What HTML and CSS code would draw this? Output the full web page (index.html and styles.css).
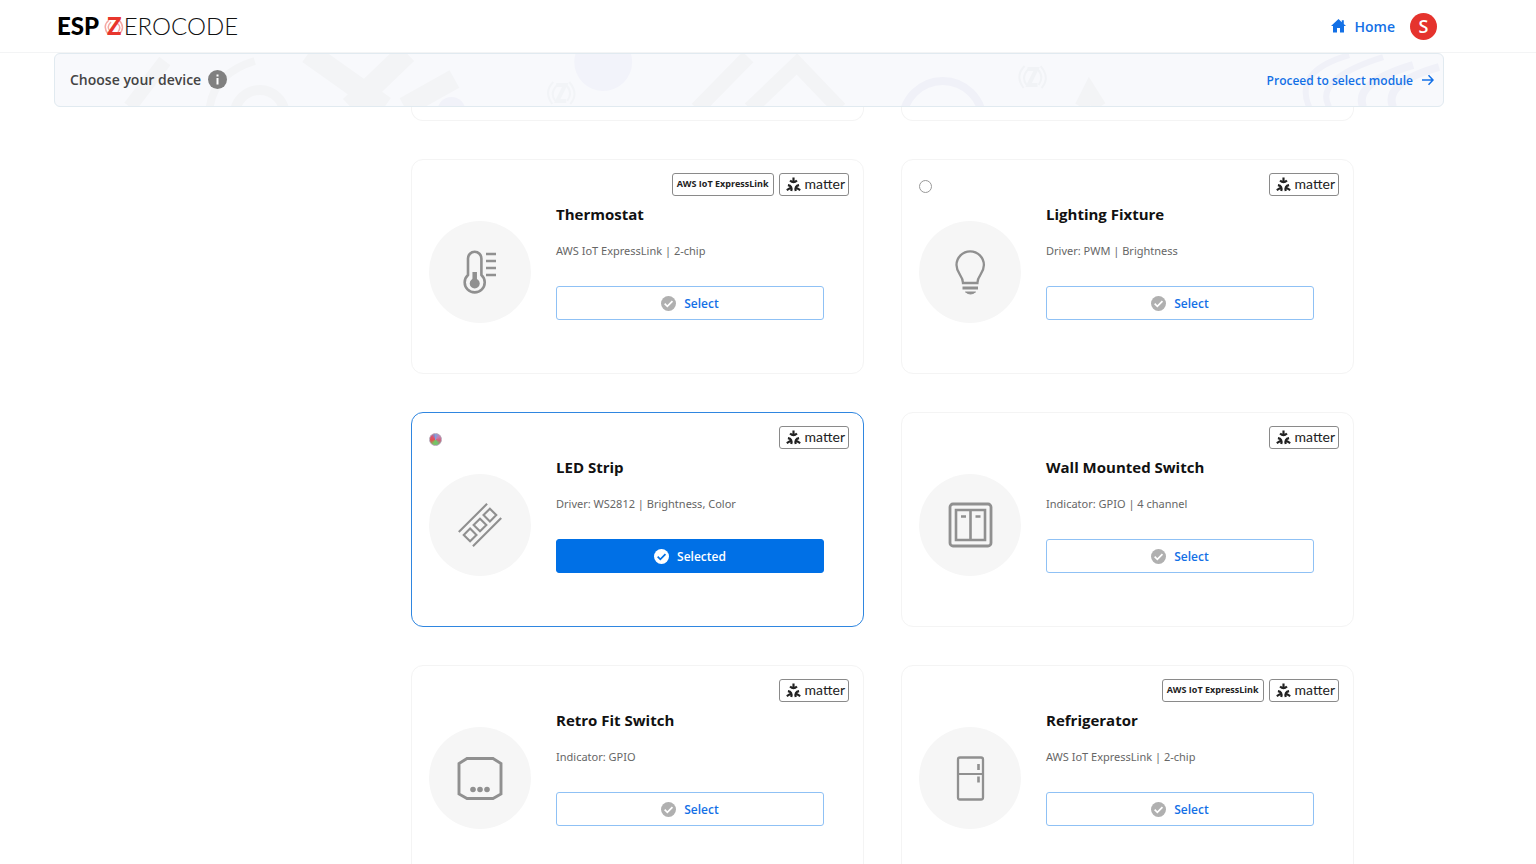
FILE: index.html
```html
<!DOCTYPE html>
<html lang="en">
<head>
    <meta charset="UTF-8">
    <meta name="viewport" content="width=device-width, initial-scale=1.0">
    <title>ESP ZeroCode</title>
    <link rel="stylesheet" href="styles.css">
</head>
<body>
    <!-- shared icons -->
    <svg class="sprite" aria-hidden="true">
        <symbol id="i-check" viewBox="0 0 14 14">
            <circle cx="7" cy="7" r="7" fill="currentColor" stroke="none"/>
            <path d="M3.4 7.2l2.5 2.4 4.8-4.9" fill="none" stroke-width="1.6"/>
        </symbol>
        <symbol id="i-matter" viewBox="0 0 14 14">
            <g fill="none" stroke="currentColor" stroke-width="2">
                <path d="M7 .5v5M3.8 3.2Q7 6.6 10.200 3.2"/>
                <path d="M.7 12.2l4.500-2.600M1.800 7.600Q6.200 8.400 4.900 13"/>
                <path d="M13.300 12.200L8.800 9.600M12.200 7.600Q7.800 8.400 9.100 13"/>
            </g>
        </symbol>
        <symbol id="i-zmark" viewBox="0 0 32 32">
            <g fill="none" stroke="currentColor" stroke-width="2">
                <path d="M8 5Q-2 15 7 27M12 8Q4 16 10 24M24 5Q34 17 25 27M21 8Q28 16 22 24"/>
                <path d="M11 8h9l-8 16h9" stroke-width="4"/>
            </g>
        </symbol>
    </svg>

    <div class="app">
        <header class="header">
            <a class="logo" href="#">
                <span class="logo-esp">ESP</span>
                <span class="logo-name"><span class="logo-z"><svg viewBox="0 0 20 18" aria-hidden="true"><path d="M5 2Q-2 8 4 16M15 2Q22 10 15 16M7 4Q2 9 6 13M13 5Q18 9 14 14" fill="none" stroke="#f5a8a3" stroke-width="1.500"/></svg>Z</span>EROCODE</span>
            </a>
            <nav class="nav">
                <a class="home" href="#">
                    <svg width="15" height="14" viewBox="0 0 15 14" aria-hidden="true"><path d="M7.500 0L0 7h2v6.500h4V9h3v4.500h4V7h2l-2.200-2V1.300h-2v1.900z" fill="currentColor"/></svg>
                    Home
                </a>
                <button class="avatar" type="button">S</button>
            </nav>
        </header>

        <section class="toolbar">
            <svg class="toolbar-art" viewBox="0 0 1390 54" preserveAspectRatio="xMidYMid slice" aria-hidden="true">
                <g fill="none" stroke="#f3f4f6">
                    <path d="M75 54L110 8" stroke-width="14"/>
                    <path d="M155 54Q160 20 200 8" stroke-width="8"/>
                    <circle cx="205" cy="62" r="25" stroke-width="10"/>
                    <path d="M254 0L330 54M352 0L296 54" stroke-width="22"/>
                    <path d="M350 54L400 26" stroke-width="20"/>
                    <path d="M643 56L694 4M696 56L743 11L786 56" stroke-width="15"/>
                    <path d="M1028 54l8-16 10 16" stroke-width="14"/>
                </g>
                <g fill="none" stroke="#f0f1f8">
                    <circle cx="889" cy="68" r="40" stroke-width="8"/>
                    <path d="M1256 54Q1240 18 1296 2M1276 54Q1260 26 1330 4" stroke-width="6"/>
                    <path d="M1310 54Q1300 30 1360 12M1340 54Q1330 30 1386 14" stroke-width="8"/>
                </g>
                <circle cx="549" cy="9" r="29" fill="#f2f3fa"/>
                <circle cx="397" cy="58" r="14" fill="#f1f2f9"/>
                <use href="#i-zmark" x="491" y="24" width="32" height="32" color="#f2f4f7"/>
                <use href="#i-zmark" x="963" y="8" width="32" height="32" color="#f1f3f6"/>
            </svg>
            <div class="toolbar-title">
                <h1>Choose your device</h1>
                <button class="info" type="button" aria-label="Info">
                    <svg width="19" height="19" viewBox="0 0 19 19" aria-hidden="true"><circle cx="9.500" cy="9.500" r="9.500" fill="#808080"/><path d="M8.500 4.500h2v2h-2zM8.500 8h2v6.500h-2z" fill="#fff"/></svg>
                </button>
            </div>
            <a class="proceed" href="#">
                Proceed to select module
                <svg width="12" height="12" viewBox="0 0 12 12" aria-hidden="true"><path d="M0 6h11M6.500 1.300L11 6l-4.500 4.700" fill="none" stroke="currentColor" stroke-width="1.500"/></svg>
            </a>
        </section>

        <main class="devices">
            <div class="card card-tail"></div>
            <div class="card card-tail"></div>

            <article class="card">
                <div class="card-top">
                    <div class="badges">
                        <span class="badge badge-aws">AWS IoT ExpressLink</span>
                        <span class="badge badge-matter"><svg aria-hidden="true"><use href="#i-matter"/></svg>matter</span>
                    </div>
                </div>
                <div class="card-body">
                    <div class="device-icon">
                        <svg width="48" height="48" viewBox="0 0 48 48" aria-hidden="true">
                            <path d="M12 27V10.500a6.700 6.700 0 0 1 13.400 0V27a10 10 0 1 1-13.400 0z" stroke-width="2.600"/>
                            <path d="M18.700 24v11" stroke-width="4.500"/>
                            <circle cx="18.700" cy="35.500" r="5" fill="#909090" stroke="none"/>
                            <path d="M30 6h10M30 13h10M30 20h10M30 27h10" stroke-width="2.600"/>
                        </svg>
                    </div>
                    <div class="card-info">
                        <h2>Thermostat</h2>
                        <p>AWS IoT ExpressLink | 2-chip</p>
                        <button class="select" type="button"><svg aria-hidden="true"><use href="#i-check"/></svg>Select</button>
                    </div>
                </div>
            </article>

            <article class="card">
                <div class="card-top">
                    <span class="swatch"></span>
                    <div class="badges">
                        <span class="badge badge-matter"><svg aria-hidden="true"><use href="#i-matter"/></svg>matter</span>
                    </div>
                </div>
                <div class="card-body">
                    <div class="device-icon">
                        <svg width="48" height="48" viewBox="0 0 48 48" aria-hidden="true">
                            <path d="M17 35c0-8-6.500-9-6.500-18a13.700 13.700 0 0 1 27.400 0c0 9-6.500 10-6.500 18z" stroke-width="2.300"/>
                            <path d="M16.500 40h15.500" stroke-width="3"/>
                            <path d="M19.500 44h10q-5 4-10 0z" fill="#909090" stroke-width="1"/>
                        </svg>
                    </div>
                    <div class="card-info">
                        <h2>Lighting Fixture</h2>
                        <p>Driver: PWM | Brightness</p>
                        <button class="select" type="button"><svg aria-hidden="true"><use href="#i-check"/></svg>Select</button>
                    </div>
                </div>
            </article>

            <article class="card card-selected">
                <div class="card-top">
                    <span class="swatch swatch-color"></span>
                    <div class="badges">
                        <span class="badge badge-matter"><svg aria-hidden="true"><use href="#i-matter"/></svg>matter</span>
                    </div>
                </div>
                <div class="card-body">
                    <div class="device-icon">
                        <svg width="48" height="48" viewBox="0 0 48 48" aria-hidden="true">
                            <g transform="rotate(-45 24 24)" stroke-width="2.100">
                                <path d="M4 14h40M4 34h40"/>
                                <path d="M5.500 19.500h9v9h-9zM19.500 19.500h9v9h-9zM33.500 19.500h9v9h-9z"/>
                            </g>
                        </svg>
                    </div>
                    <div class="card-info">
                        <h2>LED Strip</h2>
                        <p>Driver: WS2812 | Brightness, Color</p>
                        <button class="select selected" type="button"><svg aria-hidden="true"><use href="#i-check"/></svg>Selected</button>
                    </div>
                </div>
            </article>

            <article class="card">
                <div class="card-top">
                    <div class="badges">
                        <span class="badge badge-matter"><svg aria-hidden="true"><use href="#i-matter"/></svg>matter</span>
                    </div>
                </div>
                <div class="card-body">
                    <div class="device-icon">
                        <svg width="48" height="48" viewBox="0 0 48 48" aria-hidden="true">
                            <rect x="4" y="3" width="41" height="42" rx="3" stroke-width="2.800"/>
                            <path d="M10 9h29v30H10zM24.500 9v30" stroke-width="2.600"/>
                            <path d="M15 15.500h5M29.500 15.500h5" stroke-width="2.400"/>
                        </svg>
                    </div>
                    <div class="card-info">
                        <h2>Wall Mounted Switch</h2>
                        <p>Indicator: GPIO | 4 channel</p>
                        <button class="select" type="button"><svg aria-hidden="true"><use href="#i-check"/></svg>Select</button>
                    </div>
                </div>
            </article>

            <article class="card">
                <div class="card-top">
                    <div class="badges">
                        <span class="badge badge-matter"><svg aria-hidden="true"><use href="#i-matter"/></svg>matter</span>
                    </div>
                </div>
                <div class="card-body">
                    <div class="device-icon">
                        <svg width="48" height="48" viewBox="0 0 48 48" aria-hidden="true">
                            <path d="M11 4.500h26l8 5V40l-8 4.500H11L3 40V9.500z" stroke-width="2.900"/>
                            <g fill="#909090" stroke="none"><circle cx="17" cy="35.500" r="2.800"/><circle cx="24" cy="35.500" r="2.800"/><circle cx="31" cy="35.500" r="2.800"/></g>
                        </svg>
                    </div>
                    <div class="card-info">
                        <h2>Retro Fit Switch</h2>
                        <p>Indicator: GPIO</p>
                        <button class="select" type="button"><svg aria-hidden="true"><use href="#i-check"/></svg>Select</button>
                    </div>
                </div>
            </article>

            <article class="card">
                <div class="card-top">
                    <div class="badges">
                        <span class="badge badge-aws">AWS IoT ExpressLink</span>
                        <span class="badge badge-matter"><svg aria-hidden="true"><use href="#i-matter"/></svg>matter</span>
                    </div>
                </div>
                <div class="card-body">
                    <div class="device-icon">
                        <svg width="48" height="48" viewBox="0 0 48 48" aria-hidden="true">
                            <rect x="12" y="3.500" width="25" height="42" rx="2" stroke-width="2.300"/>
                            <path d="M12 20h25" stroke-width="2"/>
                            <path d="M32.500 10v6M32.500 22.500v6" stroke-width="2.600"/>
                        </svg>
                    </div>
                    <div class="card-info">
                        <h2>Refrigerator</h2>
                        <p>AWS IoT ExpressLink | 2-chip</p>
                        <button class="select" type="button"><svg aria-hidden="true"><use href="#i-check"/></svg>Select</button>
                    </div>
                </div>
            </article>
        </main>
    </div>
</body>
</html>
```
FILE: styles.css
```css
* {
    box-sizing: border-box;
}
body {
    margin: 0;
    background: #fff;
    font-family: "Open Sans", "Noto Sans", sans-serif;
    font-size: 12px;
    color: #111;
}
h1, h2, p {
    margin: 0;
}
a {
    color: #1370e6;
    text-decoration: none;
}
button {
    font-family: inherit;
    cursor: pointer;
}
.sprite {
    display: none;
}
.app {
    display: flex;
    flex-direction: column;
    height: 100vh;
    overflow: hidden;
}

/* header */
.header {
    display: flex;
    flex-shrink: 0;
    align-items: center;
    justify-content: space-between;
    height: 53px;
    padding: 0 99px 0 57px;
    border-bottom: 1px solid #f3f4f5;
}
.logo {
    display: flex;
    gap: 8px;
    font-family: Lato, sans-serif;
    font-size: 24px;
    line-height: 32px;
    color: #111;
}
.logo-esp {
    font-weight: 900;
    color: #000;
}
.logo-name {
    font-weight: 300;
}
.logo-z {
    position: relative;
    z-index: 0;
    margin-right: 2px;
    font-weight: 900;
    color: #e8362d;
}
.logo-z svg {
    position: absolute;
    z-index: -1;
    left: -3px;
    top: 7px;
    width: 20px;
    height: 18px;
}
.nav {
    display: flex;
    align-items: center;
    gap: 15px;
}
.home {
    display: flex;
    align-items: center;
    gap: 9px;
    font-size: 14px;
    font-weight: 600;
}
.avatar {
    width: 27px;
    height: 27px;
    padding: 0;
    border: 0;
    border-radius: 50%;
    background: #e5332d;
    color: #fff;
    font-size: 18px;
    font-weight: 600;
    line-height: 27px;
}

/* toolbar */
.toolbar {
    position: relative;
    display: flex;
    flex-shrink: 0;
    align-items: center;
    justify-content: space-between;
    height: 54px;
    margin: 0 92px 0 54px;
    padding: 0 9px 0 15px;
    border: 1px solid #e1eaf0;
    border-radius: 6px;
    background: #f8f9fc;
    overflow: hidden;
}
.toolbar-art {
    position: absolute;
    inset: 0;
    width: 100%;
    height: 100%;
}
.toolbar-title, .proceed {
    position: relative;
    display: flex;
    align-items: center;
    gap: 9px;
}
.toolbar-title {
    gap: 7px;
    padding-bottom: 2px;
}
.toolbar-title h1 {
    font-size: 14px;
    font-weight: 600;
    color: #444;
}
.info {
    display: flex;
    padding: 0;
    border: 0;
    background: none;
}
.proceed {
    font-weight: 600;
}

/* device cards */
.devices {
    display: grid;
    grid-template-columns: 1fr 1fr;
    gap: 38px 37px;
    padding: 0 182px 0 411px;
}
.card {
    min-height: 215px;
    border: 1px solid #f4f4f4;
    border-radius: 12px;
}
.card-tail {
    min-height: 14px;
    border-top: 0;
    border-radius: 0 0 12px 12px;
}
.card-selected {
    border-color: #2f86e0;
}
.card-top {
    display: flex;
    padding: 13px 14px 0 17px;
}
.swatch {
    width: 13px;
    height: 13px;
    margin-top: 7px;
    border: 1px solid #999;
    border-radius: 50%;
}
.swatch-color {
    border-color: #b3a3b5;
    background: conic-gradient(#7f9fe0, #c87fae, #d0607c, #6fc46f, #7ac45f, #e0524f, #e0506a, #6f9be0);
}
.badges {
    display: flex;
    gap: 5px;
    margin-left: auto;
}
.badge {
    display: flex;
    height: 23px;
    border: 1px solid #8a8a8a;
    border-radius: 3px;
    line-height: 20px;
    color: #222;
}
.badge-aws {
    padding: 0 4px;
    font-size: 9px;
    font-weight: 700;
}
.badge-matter {
    gap: 4px;
    padding: 0 3px 0 6px;
    font-family: Lato, sans-serif;
    font-size: 14px;
}
.badge-matter svg {
    width: 15px;
    height: 15px;
    margin-top: 3px;
}
.card-body {
    display: flex;
    gap: 25px;
    padding: 6px 39px 0 17px;
}
.device-icon {
    display: flex;
    flex-shrink: 0;
    align-items: center;
    justify-content: center;
    width: 102px;
    height: 102px;
    margin-top: 19px;
    border-radius: 50%;
    background: #f6f6f6;
}
.device-icon svg {
    fill: none;
    stroke: #909090;
}
.card-info {
    flex: 1;
}
.card-info h2 {
    font-size: 15px;
    font-weight: 700;
    line-height: 24px;
}
.card-info p {
    margin-top: 15px;
    font-family: "Noto Sans", "Open Sans", sans-serif;
    font-size: 11px;
    line-height: 20px;
    color: #666;
}
.select {
    display: flex;
    align-items: center;
    justify-content: center;
    gap: 8px;
    width: 100%;
    height: 34px;
    margin-top: 25px;
    padding: 0;
    border: 1px solid #8fc1f5;
    border-radius: 3px;
    background: #fff;
    color: #1370e6;
    font-size: 12px;
    font-weight: 600;
}
.select svg {
    width: 15px;
    height: 15px;
    color: #b0b0b0;
    stroke: #fff;
}
.selected {
    border-color: #0070e6;
    background: #0070e6;
    color: #fff;
}
.selected svg {
    color: #fff;
    stroke: #0070e6;
}
```
